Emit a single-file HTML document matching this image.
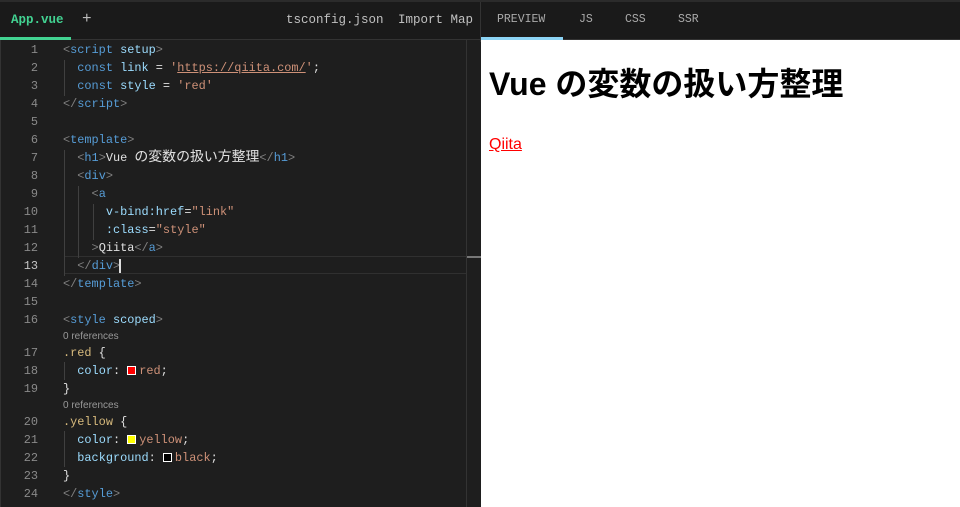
<!DOCTYPE html>
<html><head><meta charset="utf-8"><style>
*{margin:0;padding:0;box-sizing:border-box}
body{width:960px;height:507px;overflow:hidden;background:#1e1e1e;font-family:"Liberation Mono","Noto Sans CJK JP",monospace;position:relative}
.hdr{position:absolute;top:0;left:0;width:960px;height:40px;background:#1a1a1a;border-top:2px solid #2b2b2b;border-bottom:1px solid #333}
.t{position:absolute;top:11px;font-size:12.5px;color:#c0c0c0}
.ed{position:absolute;top:40px;left:0;width:480px;height:467px;background:#1e1e1e;border-left:1px solid #333}
.ln{position:absolute;left:0;width:38px;text-align:right;font-size:11.9px;color:#8a8a8a;height:18px;line-height:18px}
.cd{position:absolute;left:63px;font-size:11.9px;white-space:pre;height:18px;line-height:18px;color:#e0e0e0}
.p{color:#808080}.k{color:#569cd6}.a{color:#9cdcfe}.s{color:#ce9178}.w{color:#d4d4d4}.y{color:#d7ba7d}
.j{font-size:13.9px}
.ref{position:absolute;left:63px;font-family:"Liberation Sans",sans-serif;font-size:10px;color:#999}
.g{position:absolute;width:1px;background:#404040}
.sw{display:inline-block;width:9px;height:9px;border:1px solid #fff;vertical-align:-1px;margin-right:3px}
.pv{position:absolute;left:481px;top:40px;width:479px;height:467px;background:#fff}
</style></head><body>
<div class="hdr">
<span class="t" style="left:11px;color:#42d392;font-weight:bold">App.vue</span>
<div style="position:absolute;left:0;top:35px;width:71px;height:3px;background:#42d392"></div>
<span class="t" style="left:82px;font-size:16px;top:8px;color:#bbb">+</span>
<span class="t" style="left:286px">tsconfig.json</span>
<span class="t" style="left:398px">Import Map</span>
<div style="position:absolute;left:480px;top:0;width:1px;height:40px;background:#333"></div>
<span class="t" style="left:497px;font-size:11.5px;color:#aaa">PREVIEW</span>
<span class="t" style="left:579px;font-size:11.5px;color:#aaa">JS</span>
<span class="t" style="left:625px;font-size:11.5px;color:#aaa">CSS</span>
<span class="t" style="left:678px;font-size:11.5px;color:#aaa">SSR</span>
<div style="position:absolute;left:481px;top:35px;width:82px;height:3px;background:#8cd4f5"></div>
</div>
<div class="ed">
<div style="position:absolute;left:465px;top:0;width:1px;height:467px;background:#333"></div>
<div style="position:absolute;left:63px;top:216px;width:402px;height:18px;border-top:1px solid #303030;border-bottom:1px solid #303030"></div>
<div style="position:absolute;left:466px;top:216px;width:14px;height:2px;background:#777"></div>
</div>
<div style="position:absolute;top:41px;left:0;width:480px">
<div class="g" style="left:64px;top:19px;height:36px"></div>
<div class="g" style="left:64px;top:109px;height:126px"></div>
<div class="g" style="left:78px;top:145px;height:72px"></div>
<div class="g" style="left:93px;top:163px;height:36px"></div>
<div class="g" style="left:64px;top:321px;height:18px"></div>
<div class="g" style="left:64px;top:390px;height:36px"></div>
</div>
<div style="position:absolute;top:41px;left:0;width:480px">
<div class="ln" style="top:0">1</div><div class="cd" style="top:0"><span class="p">&lt;</span><span class="k">script</span> <span class="a">setup</span><span class="p">&gt;</span></div>
<div class="ln" style="top:18px">2</div><div class="cd" style="top:18px">  <span class="k">const</span> <span class="a">link</span> = <span class="s">'<span style="text-decoration:underline">https://qiita.com/</span>'</span>;</div>
<div class="ln" style="top:36px">3</div><div class="cd" style="top:36px">  <span class="k">const</span> <span class="a">style</span> = <span class="s">'red'</span></div>
<div class="ln" style="top:54px">4</div><div class="cd" style="top:54px"><span class="p">&lt;/</span><span class="k">script</span><span class="p">&gt;</span></div>
<div class="ln" style="top:72px">5</div>
<div class="ln" style="top:90px">6</div><div class="cd" style="top:90px"><span class="p">&lt;</span><span class="k">template</span><span class="p">&gt;</span></div>
<div class="ln" style="top:108px">7</div><div class="cd" style="top:108px">  <span class="p">&lt;</span><span class="k">h1</span><span class="p">&gt;</span>Vue <span class="j">の変数の扱い方整理</span><span class="p">&lt;/</span><span class="k">h1</span><span class="p">&gt;</span></div>
<div class="ln" style="top:126px">8</div><div class="cd" style="top:126px">  <span class="p">&lt;</span><span class="k">div</span><span class="p">&gt;</span></div>
<div class="ln" style="top:144px">9</div><div class="cd" style="top:144px">    <span class="p">&lt;</span><span class="k">a</span></div>
<div class="ln" style="top:162px">10</div><div class="cd" style="top:162px">      <span class="a">v-bind:href</span>=<span class="s">"link"</span></div>
<div class="ln" style="top:180px">11</div><div class="cd" style="top:180px">      <span class="a">:class</span>=<span class="s">"style"</span></div>
<div class="ln" style="top:198px">12</div><div class="cd" style="top:198px">    <span class="p">&gt;</span>Qiita<span class="p">&lt;/</span><span class="k">a</span><span class="p">&gt;</span></div>
<div class="ln" style="top:216px;color:#c6c6c6">13</div><div class="cd" style="top:216px">  <span class="p">&lt;/</span><span class="k">div</span><span class="p">&gt;</span><span style="border-left:2px solid #ddd;margin-left:-1px"></span></div>
<div class="ln" style="top:234px">14</div><div class="cd" style="top:234px"><span class="p">&lt;/</span><span class="k">template</span><span class="p">&gt;</span></div>
<div class="ln" style="top:252px">15</div>
<div class="ln" style="top:270px">16</div><div class="cd" style="top:270px"><span class="p">&lt;</span><span class="k">style</span> <span class="a">scoped</span><span class="p">&gt;</span></div>
<div class="ref" style="top:290px">0 references</div>
<div class="ln" style="top:303px">17</div><div class="cd" style="top:303px"><span class="y">.red</span> {</div>
<div class="ln" style="top:321px">18</div><div class="cd" style="top:321px">  <span class="a">color</span>: <span class="sw" style="background:#f00"></span><span class="s">red</span>;</div>
<div class="ln" style="top:339px">19</div><div class="cd" style="top:339px">}</div>
<div class="ref" style="top:359px">0 references</div>
<div class="ln" style="top:372px">20</div><div class="cd" style="top:372px"><span class="y">.yellow</span> {</div>
<div class="ln" style="top:390px">21</div><div class="cd" style="top:390px">  <span class="a">color</span>: <span class="sw" style="background:#ff0"></span><span class="s">yellow</span>;</div>
<div class="ln" style="top:408px">22</div><div class="cd" style="top:408px">  <span class="a">background</span>: <span class="sw" style="background:#000"></span><span class="s">black</span>;</div>
<div class="ln" style="top:426px">23</div><div class="cd" style="top:426px">}</div>
<div class="ln" style="top:444px">24</div><div class="cd" style="top:444px"><span class="p">&lt;/</span><span class="k">style</span><span class="p">&gt;</span></div>
</div>
<div class="pv">
<div style="position:absolute;left:8px;top:26px;font-family:'Liberation Sans','Noto Sans CJK JP',sans-serif;font-size:32px;font-weight:bold;color:#000;line-height:37px;white-space:nowrap">Vue の変数の扱い方整理</div>
<div style="position:absolute;left:8px;top:96px;font-family:'Liberation Sans',sans-serif;font-size:16px;color:#f00;text-decoration:underline">Qiita</div>
</div>
</body></html>
